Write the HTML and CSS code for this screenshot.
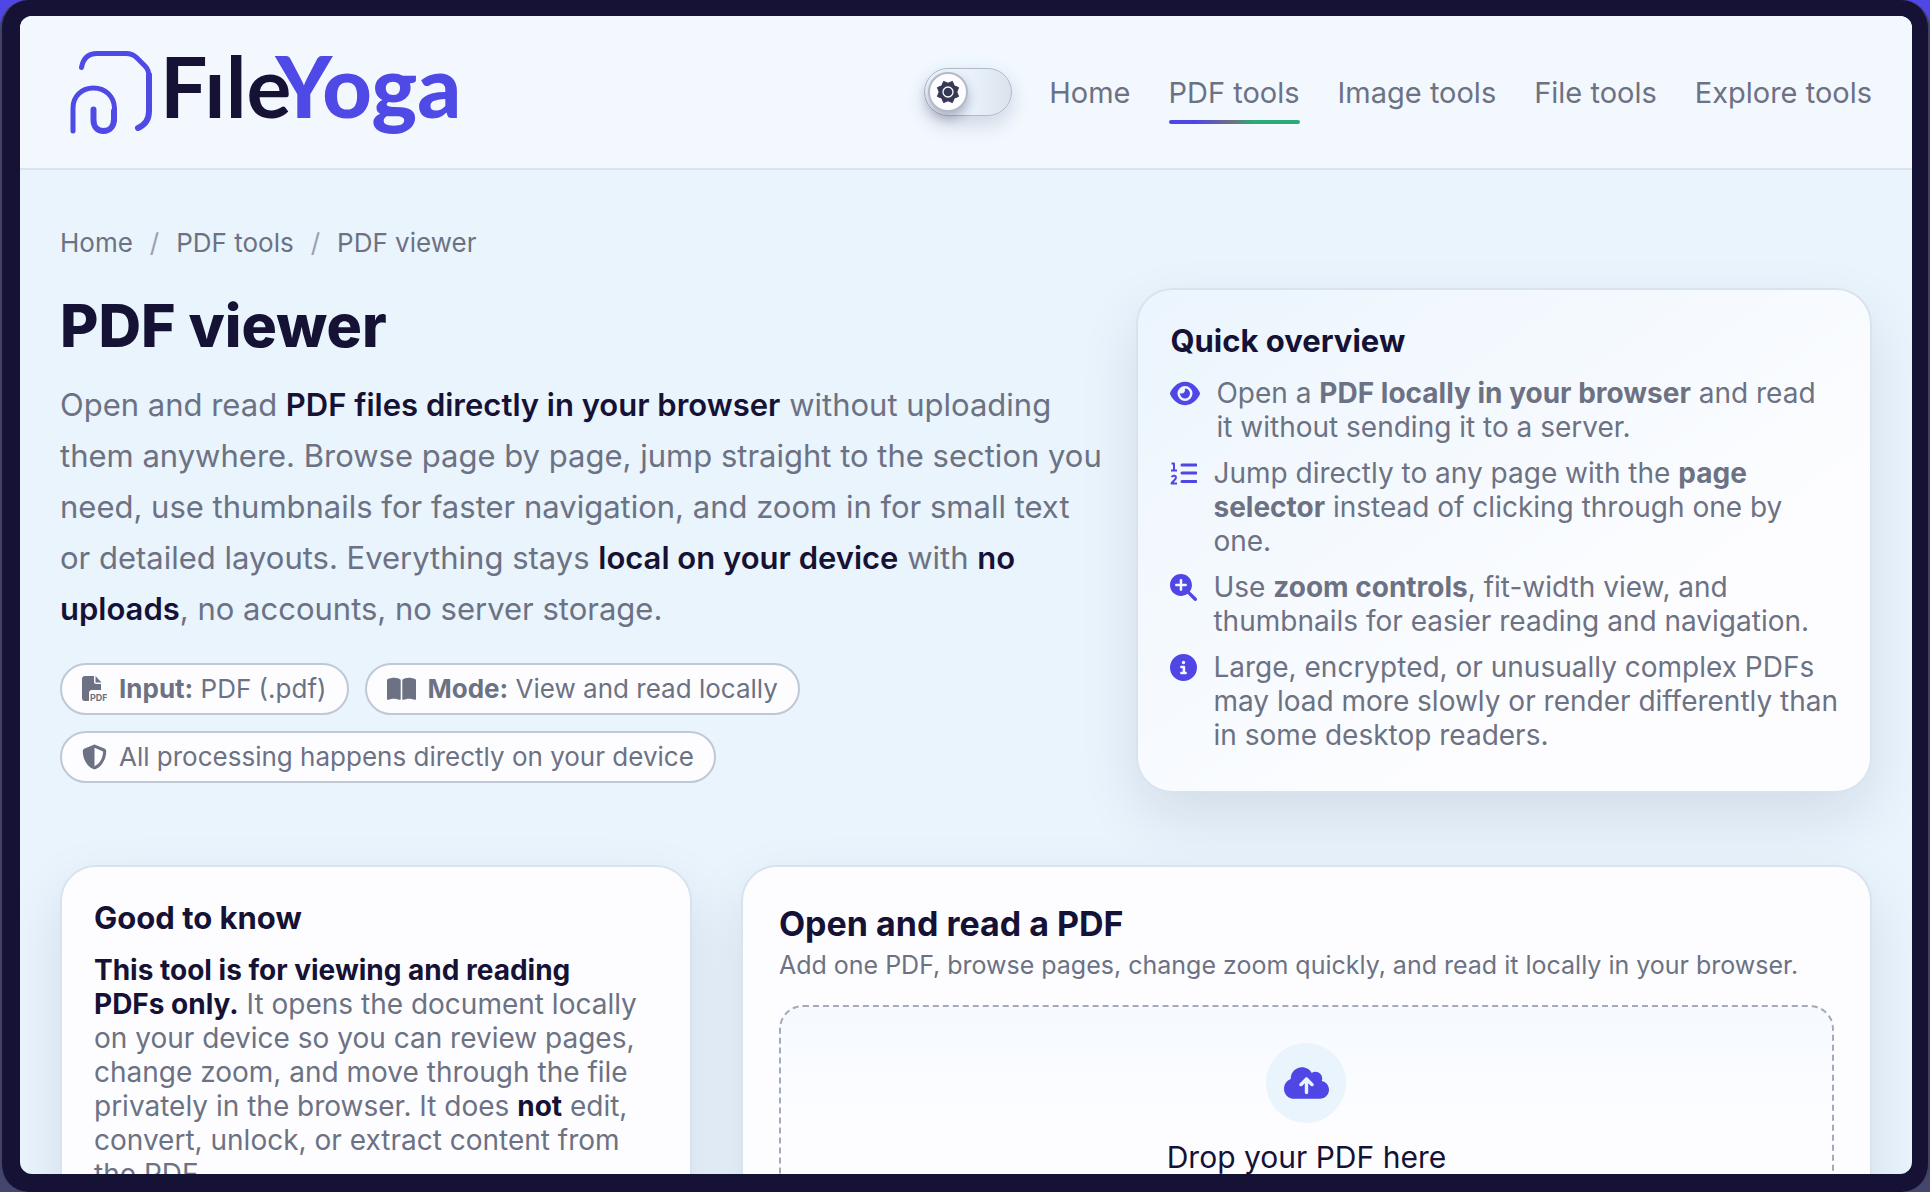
FILE: index.html
```html
<!DOCTYPE html>
<html lang="en">

<head>
    <meta charset="UTF-8">
    <meta name="viewport" content="width=device-width, initial-scale=1.0">
    <title>PDF viewer - FileYoga</title>
    <link rel="stylesheet" href="styles.css">
</head>

<body>

    <div class="device">
        <div class="screen">

            <!-- Header -->
            <header class="site-header">
                <a class="logo" href="#" aria-label="FileYoga">
                    <svg class="logo-mark" viewBox="70 50 86 86" fill="none" stroke="currentColor" stroke-linecap="round" stroke-linejoin="round">
                        <path stroke-width="5" d="M81.500 68.500C83 60 88 54.500 97 54.500H126C131 54.500 134 56 137 59L145 67C148 70 149 73 149 78" />
                        <path stroke-width="6" d="M149 76V112C149 121 145 126 138 129" />
                        <path stroke-width="5" d="M73 132V109C73 97 82 89 93.500 89C105 89 114 97 114.500 109V121" />
                        <path stroke-width="6" d="M114 112V120C114 127 110 132 103.500 132C97 132 93.500 127 93.500 121V110.500" />
                    </svg>
                    <span class="logo-text"><span class="logo-file">Fıle</span><span class="logo-yoga">Yoga</span></span>
                </a>

                <div class="header-right">
                    <label class="theme-toggle">
                        <input type="checkbox" role="switch" aria-label="Dark mode">
                        <span class="theme-knob">
                            <svg viewBox="-12 -12 24 24">
                                <path d="M4.400 -10.600L6.200 -6.200L10.600 -4.400L8.800 0L10.600 4.400L6.200 6.200L4.400 10.600L0 8.800L-4.400 10.600L-6.200 6.200L-10.600 4.400L-8.800 0L-10.600 -4.400L-6.200 -6.200L-4.400 -10.600L0 -8.800Z" fill="#363955" stroke="#363955" stroke-width="1" stroke-linejoin="round" />
                                <circle r="5" fill="#363955" stroke="#fdfdff" stroke-width="1.300" />
                            </svg>
                        </span>
                    </label>
                    <nav class="main-nav">
                        <a href="#">Home</a>
                        <a href="#" class="active">PDF tools</a>
                        <a href="#">Image tools</a>
                        <a href="#">File tools</a>
                        <a href="#">Explore tools</a>
                    </nav>
                </div>
            </header>

            <main>
                <nav class="breadcrumb" aria-label="Breadcrumb">
                    <a href="#">Home</a>
                    <span class="sep">/</span>
                    <a href="#">PDF tools</a>
                    <span class="sep">/</span>
                    <span>PDF viewer</span>
                </nav>

                <!-- Intro -->
                <section class="hero">
                    <div class="hero-text">
                        <h1>PDF viewer</h1>
                        <p class="lead">
                            Open and read <strong>PDF files directly in your browser</strong> without uploading
                            them anywhere. Browse page by page, jump straight to the section you need, use
                            thumbnails for faster navigation, and zoom in for small text or detailed layouts.
                            Everything stays <strong>local on your device</strong> with <strong>no uploads</strong>,
                            no accounts, no server storage.
                        </p>
                        <div class="chips">
                            <span class="chip">
                                <svg width="25" height="26" viewBox="0 0 25 26" fill="currentColor">
                                    <path d="M3 0H12V6C12 7 13 8 14 8H19V14H10C8 14 7 15 7 17V25H3C1 25 0 24 0 22V3C0 1 1 0 3 0Z" />
                                    <path d="M13.500 0L19.500 6.500H13.500Z" />
                                    <text x="8" y="25" font-size="9" font-weight="700">PDF</text>
                                </svg>
                                <span><strong>Input:</strong> PDF (.pdf)</span>
                            </span>
                            <span class="chip">
                                <svg width="29" height="26" viewBox="0 0 576 512" fill="currentColor">
                                    <path d="M249.600 471.500c10.800 3.800 22.400-4.100 22.400-15.500V78.600c0-4.200-1.600-8.400-5-11C247.400 52 202.400 32 144 32C93.500 32 46.300 45.300 18.100 56.100C6.800 60.500 0 71.700 0 83.800V454.100c0 11.900 12.800 20.200 24.100 16.500C55.600 460.100 105.500 448 144 448c33.900 0 79 14 105.600 23.500zm76.800 0C353 462 398.100 448 432 448c38.500 0 88.400 12.100 119.900 22.600c11.300 3.800 24.100-4.600 24.100-16.500V83.800c0-12.100-6.800-23.300-18.100-27.600C529.700 45.300 482.500 32 432 32c-58.400 0-103.400 20-123 35.600c-3.300 2.600-5 6.800-5 11V456c0 11.400 11.700 19.300 22.400 15.500z" />
                                </svg>
                                <span><strong>Mode:</strong> View and read locally</span>
                            </span>
                            <span class="chip">
                                <svg width="25" height="26" viewBox="0 0 512 512" fill="currentColor">
                                    <path d="M256 0c4.600 0 9.200 1 13.400 2.900L457.700 82.800c22 9.300 38.400 31 38.300 57.200c-.5 99.200-41.300 280.700-213.600 363.200c-16.700 8-36.100 8-52.800 0C57.300 420.700 16.500 239.200 16 140c-.1-26.200 16.300-47.900 38.300-57.200L242.700 2.900C246.800 1 251.400 0 256 0zm0 66.800V444.800C394 378 431.100 230.100 432 141.400L256 66.800l0 0z" />
                                </svg>
                                <span>All processing happens directly on your device</span>
                            </span>
                        </div>
                    </div>

                    <aside class="card overview">
                        <h2>Quick overview</h2>
                        <ul>
                            <li>
                                <svg width="30" height="27" viewBox="0 0 576 512" fill="currentColor">
                                    <path d="M288 32c-80.800 0-145.500 36.800-192.600 80.600C48.600 156 17.300 208 2.500 243.700c-3.300 7.900-3.300 16.700 0 24.600C17.300 304 48.600 356 95.400 399.400C142.500 443.200 207.200 480 288 480s145.500-36.800 192.600-80.600c46.800-43.500 78.100-95.400 93-131.100c3.300-7.900 3.300-16.700 0-24.600c-14.900-35.700-46.200-87.700-93-131.100C433.500 68.800 368.800 32 288 32zM144 256a144 144 0 1 1 288 0 144 144 0 1 1 -288 0zm144-64c0 35.300-28.700 64-64 64c-7.100 0-13.900-1.200-20.300-3.300c-5.500-1.800-11.900 1.600-11.700 7.400c.3 6.900 1.300 13.800 3.200 20.700c13.700 51.200 66.400 81.600 117.600 67.900s81.600-66.400 67.900-117.600c-11.100-41.500-47.800-69.400-88.600-71.100c-5.800-.2-9.200 6.100-7.400 11.700c2.100 6.400 3.300 13.200 3.300 20.300z" />
                                </svg>
                                <span>Open a <strong>PDF locally in your browser</strong> and read it&nbsp;without sending it to a server.</span>
                            </li>
                            <li>
                                <svg width="27" height="27" viewBox="0 0 27 27" fill="none" stroke="currentColor">
                                    <path d="M12 5H26M12 13H26M12 21.500H26" stroke-width="3" stroke-linecap="round" />
                                    <path d="M1.500 3.500H4V10M1 10.500H7M1.500 17C3 15 6 15.500 6 17.500C6 19.500 3 21 1.500 23.500H7" stroke-width="2" stroke-linejoin="round" />
                                </svg>
                                <span>Jump directly to any page with the <strong>page selector</strong> instead of clicking through one by one.</span>
                            </li>
                            <li>
                                <svg width="27" height="27" viewBox="0 0 512 512" fill="currentColor">
                                    <path d="M416 208c0 45.900-14.900 88.300-40 122.700L502.600 457.400c12.500 12.500 12.500 32.800 0 45.300s-32.800 12.500-45.300 0L330.700 376c-34.400 25.200-76.800 40-122.700 40C93.100 416 0 322.900 0 208S93.100 0 208 0S416 93.100 416 208zM184 296c0 13.300 10.700 24 24 24s24-10.700 24-24V232h64c13.300 0 24-10.700 24-24s-10.700-24-24-24H232V120c0-13.300-10.700-24-24-24s-24 10.700-24 24v64H120c-13.300 0-24 10.700-24 24s10.700 24 24 24h64v64z" />
                                </svg>
                                <span>Use <strong>zoom controls</strong>, fit-width view, and thumbnails for easier reading and navigation.</span>
                            </li>
                            <li>
                                <svg width="27" height="27" viewBox="0 0 512 512" fill="currentColor">
                                    <path d="M256 512A256 256 0 1 0 256 0a256 256 0 1 0 0 512zM216 336h24V272H216c-13.300 0-24-10.700-24-24s10.700-24 24-24h48c13.300 0 24 10.700 24 24v88h8c13.300 0 24 10.700 24 24s-10.700 24-24 24H216c-13.300 0-24-10.700-24-24s10.700-24 24-24zm40-208a32 32 0 1 1 0 64 32 32 0 1 1 0-64z" />
                                </svg>
                                <span>Large, encrypted, or unusually complex PDFs may load more slowly or render differently than in some desktop readers.</span>
                            </li>
                        </ul>
                    </aside>
                </section>

                <!-- Tool -->
                <section class="tool-row">
                    <aside class="card">
                        <h2>Good to know</h2>
                        <p class="note">
                            <strong>This tool is for viewing and reading PDFs&nbsp;only.</strong> It opens the document
                            locally on your device so you can review pages, change zoom, and move through the file
                            privately in the browser. It does <strong>not</strong> edit, convert, unlock, or extract
                            content from the PDF.
                        </p>
                    </aside>

                    <div class="card tool">
                        <h2>Open and read a PDF</h2>
                        <p class="tool-sub">Add one PDF, browse pages, change zoom quickly, and read it locally in your browser.</p>
                        <label class="dropzone">
                            <input type="file" accept="application/pdf">
                            <span class="drop-icon">
                                <svg width="45" height="36" viewBox="0 0 640 512" fill="currentColor">
                                    <path d="M144 480C64.500 480 0 415.500 0 336c0-62.800 40.200-116.200 96.200-135.900c-.1-2.700-.2-5.400-.2-8.100c0-88.400 71.600-160 160-160c59.300 0 111 32.200 138.700 80.200C409.900 102 428.300 96 448 96c53 0 96 43 96 96c0 12.200-2.300 23.800-6.400 34.600C596 238.400 640 290.100 640 352c0 70.700-57.300 128-128 128H144zm79-217c-9.400 9.400-9.400 24.600 0 33.900s24.600 9.400 33.900 0l39-39V392c0 13.300 10.700 24 24 24s24-10.700 24-24V257.900l39 39c9.400 9.400 24.600 9.400 33.900 0s9.400-24.600 0-33.900l-80-80c-9.400-9.400-24.600-9.400-33.900 0l-80 80z" />
                                </svg>
                            </span>
                            <span class="drop-title">Drop your PDF here</span>
                        </label>
                    </div>
                </section>
            </main>

        </div>
    </div>

</body>

</html>
```
FILE: styles.css
```css
/* General Styles */
* {
    box-sizing: border-box;
}

html,
body {
    height: 100%;
    margin: 0;
}

body {
    background: linear-gradient(#4f46e5, #45466e);
    font-family: Inter, "Liberation Sans", sans-serif;
    font-size: 28px;
    line-height: 34px;
    color: #6c7283;
    overflow: hidden;
}

h1,
h2,
p,
ul {
    margin: 0;
    padding: 0;
}

h1,
h2 {
    color: #151236;
}

a {
    color: inherit;
    text-decoration: none;
}

/* Device frame */
.device {
    height: 100vh;
    padding: 16px 16px 18px 18px;
    background: #151236;
    border: 0 solid #42435f;
    border-width: 0 2px;
    border-radius: 28px;
}

.screen {
    height: 100%;
    overflow: hidden;
    border-radius: 12px;
    background: #e9f4fd;
}

/* Header */
.site-header {
    display: flex;
    align-items: center;
    justify-content: space-between;
    height: 154px;
    padding: 0 40px 0 50px;
    background: #f2f8fe;
    border-bottom: 2px solid #d9e3ed;
}

.logo {
    display: flex;
    align-items: center;
    gap: 4px;
    color: #4f4ae6;
}

.logo-mark {
    width: 86px;
    height: 86px;
}

.logo-text {
    padding-bottom: 14px;
    font-family: Lato, "Liberation Sans", sans-serif;
    font-size: 86px;
    line-height: 86px;
}

.logo-file {
    color: #151236;
    font-size: 84px;
    font-weight: 700;
}

.logo-yoga {
    margin-left: -16px;
    font-weight: 900;
}

.header-right {
    display: flex;
    align-items: center;
    gap: 37px;
}

.theme-toggle {
    position: relative;
    display: block;
    width: 88px;
    height: 48px;
}

.theme-toggle input {
    appearance: none;
    display: block;
    width: 100%;
    height: 100%;
    margin: 0;
    border: 1px solid #b3bac8;
    border-radius: 24px;
    background: linear-gradient(90deg, #f2f8fe, #e9f2fb 55%, #dae2ec);
    box-shadow: 0 10px 20px rgba(21, 18, 54, 0.12), 0 0 18px #e4f2fe;
    cursor: pointer;
}

.theme-knob {
    position: absolute;
    top: 4px;
    left: 4px;
    display: flex;
    align-items: center;
    justify-content: center;
    width: 40px;
    height: 40px;
    border: 2px solid #b3bac8;
    border-radius: 50%;
    background: #fdfdff;
    box-shadow: 0 6px 12px rgba(21, 18, 54, 0.3);
    pointer-events: none;
}

.theme-knob svg {
    width: 24px;
    height: 24px;
}

.main-nav {
    display: flex;
    gap: 38px;
    font-size: 29px;
}

.main-nav a {
    position: relative;
    padding: 16px 0 14px;
}

.main-nav .active::after {
    content: "";
    position: absolute;
    left: 0;
    right: 0;
    bottom: 0;
    height: 4px;
    border-radius: 2px;
    background: linear-gradient(90deg, #4f46e5 20%, #6c7283 48%, #2bab78 65%);
}

/* Page */
main {
    padding: 56px 40px;
}

.breadcrumb {
    display: flex;
    gap: 17px;
    font-size: 26px;
    margin-bottom: 28px;
}

.breadcrumb .sep {
    color: #9aa0b0;
}

.hero {
    display: grid;
    grid-template-columns: 71fr 50fr;
    gap: 32px;
    align-items: start;
    margin-bottom: 72px;
}

h1 {
    font-size: 59px;
    font-weight: 800;
    line-height: 75px;
    margin-bottom: 16px;
}

.lead {
    font-size: 31px;
    line-height: 51px;
}

.lead strong {
    color: #151236;
    font-weight: 600;
}

.chips {
    display: flex;
    flex-wrap: wrap;
    gap: 16px;
    margin-top: 29px;
}

.chip {
    display: flex;
    align-items: center;
    gap: 12px;
    padding: 8px 20px;
    border: 2px solid #bfc8d6;
    border-radius: 26px;
    background: #fdfdff;
    font-size: 26px;
    line-height: 32px;
}

/* Cards */
.card {
    padding: 32px;
    border: 2px solid #d9e3ed;
    border-radius: 36px;
    background: #fdfdff;
    box-shadow: 0 24px 60px rgba(21, 18, 54, 0.1);
}

.card h2 {
    font-size: 31px;
    font-weight: 700;
    line-height: 38px;
    margin-bottom: 16px;
}

.overview {
    padding-right: 28px;
    padding-bottom: 39px;
    background: linear-gradient(145deg, #ebf5fd, #fdfdff 70%);
}

.overview ul {
    display: flex;
    flex-direction: column;
    gap: 12px;
    list-style: none;
}

.overview li {
    display: flex;
    gap: 16px;
}

.overview svg {
    flex: none;
    margin-top: 4px;
    color: #4f46e5;
}

.tool-row {
    display: grid;
    grid-template-columns: 100fr 179fr;
    gap: 49px;
}

.note strong {
    color: #151236;
    font-weight: 700;
}

.card.tool {
    padding: 36px;
}

.card.tool h2 {
    font-size: 34px;
    line-height: 42px;
    margin-bottom: 4px;
}

.tool-sub {
    font-size: 25px;
    line-height: 32px;
}

.dropzone {
    display: flex;
    flex-direction: column;
    align-items: center;
    gap: 16px;
    margin-top: 24px;
    padding: 36px;
    border: 2px dashed #a3abba;
    border-radius: 24px;
    background: linear-gradient(#f5faff, #fdfdff 120px);
    cursor: pointer;
}

.dropzone input {
    position: absolute;
    width: 1px;
    height: 1px;
    opacity: 0;
}

.drop-icon {
    display: flex;
    align-items: center;
    justify-content: center;
    width: 80px;
    height: 80px;
    border-radius: 50%;
    background: #e9f4fd;
    color: #4f46e5;
}

.drop-title {
    color: #151236;
    font-size: 30px;
    line-height: 36px;
}
```
